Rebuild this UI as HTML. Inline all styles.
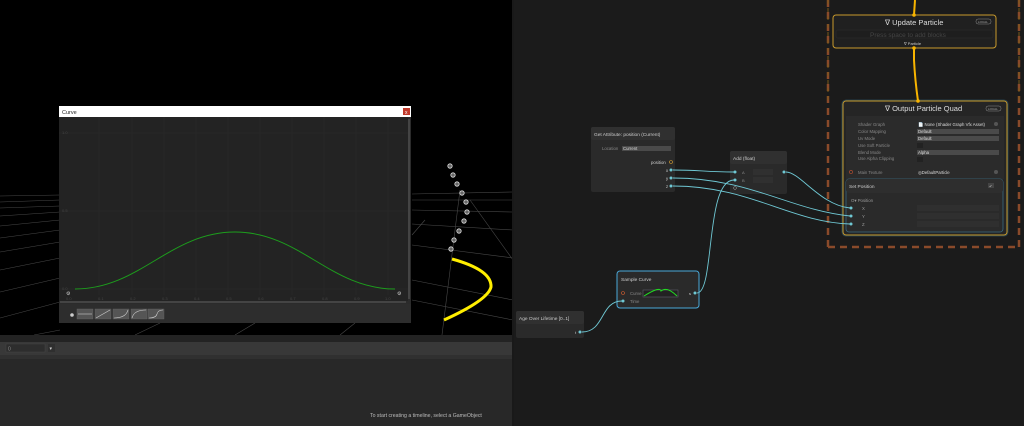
<!DOCTYPE html>
<html><head><meta charset="utf-8"><style>
html,body{margin:0;padding:0;width:1024px;height:426px;overflow:hidden;background:#1b1b1b;font-family:"Liberation Sans",sans-serif}
svg text{font-family:"Liberation Sans",sans-serif}
</style></head><body>
<svg width="1024" height="426" viewBox="0 0 1024 426" xmlns="http://www.w3.org/2000/svg">
<!-- LEFT scene -->
<rect x="0" y="0" width="513" height="426" fill="#000"/>
<g stroke="#5a5a5a" stroke-width="0.6" opacity="0.8">
<line x1="0" y1="196" x2="60" y2="195"/><line x1="0" y1="202" x2="60" y2="200"/><line x1="0" y1="208" x2="60" y2="206"/>
<line x1="0" y1="216" x2="60" y2="212"/><line x1="0" y1="226" x2="60" y2="220"/><line x1="0" y1="238" x2="60" y2="230"/>
<line x1="0" y1="252" x2="60" y2="242"/><line x1="0" y1="270" x2="60" y2="258"/><line x1="0" y1="292" x2="60" y2="278"/>
<line x1="0" y1="318" x2="60" y2="302"/>
<line x1="412" y1="194" x2="513" y2="192"/><line x1="412" y1="200" x2="513" y2="200"/><line x1="412" y1="210" x2="513" y2="212"/>
<line x1="412" y1="224" x2="513" y2="230"/><line x1="412" y1="245" x2="513" y2="258"/><line x1="412" y1="280" x2="513" y2="300"/>
<line x1="460" y1="190" x2="442" y2="335"/><line x1="470" y1="200" x2="513" y2="260"/><line x1="425" y1="220" x2="412" y2="235"/>
<line x1="412" y1="300" x2="513" y2="320"/>
<line x1="60" y1="330" x2="34" y2="335"/><line x1="160" y1="323" x2="135" y2="335"/><line x1="255" y1="323" x2="235" y2="335"/><line x1="355" y1="323" x2="340" y2="335"/>
</g>
<g fill="#666" stroke="#ddd" stroke-width="0.8">
<circle cx="450" cy="166" r="2.2"/><circle cx="453" cy="175" r="2.2"/><circle cx="457" cy="184" r="2.2"/><circle cx="462" cy="193" r="2.2"/>
<circle cx="466" cy="202" r="2.2"/><circle cx="467" cy="212" r="2.2"/><circle cx="464" cy="221" r="2.2"/><circle cx="459" cy="231" r="2.2"/>
<circle cx="454" cy="240" r="2.2"/><circle cx="451" cy="249" r="2.2"/>
</g>
<path d="M452 259 Q492 270 491 287 Q488 300 444 320" stroke="#ffee00" stroke-width="3" fill="none"/>
<!-- bottom panels -->
<rect x="0" y="335" width="513" height="7" fill="#232323"/>
<rect x="0" y="342" width="513" height="13" fill="#383838"/>
<rect x="6" y="344" width="39" height="8" fill="#2d2d2d" stroke="#444" stroke-width="0.5"/>
<text x="8" y="350.5" font-size="5" fill="#888">0</text>
<rect x="48" y="344" width="7" height="8" fill="#2f2f2f"/><text x="49.5" y="350" font-size="5" fill="#ccc">▾</text>
<rect x="0" y="355" width="513" height="4" fill="#303030"/>
<rect x="0" y="359" width="513" height="67" fill="#282828"/>
<text x="370" y="417" font-size="5.2" fill="#bbb">To start creating a timeline, select a GameObject</text>
<!-- Curve window -->
<rect x="59" y="106" width="352" height="217" fill="#2b2b2b"/>
<rect x="59" y="106" width="352" height="11" fill="#fff"/>
<text x="62" y="114" font-size="5.5" fill="#222">Curve</text>
<rect x="403" y="108" width="7" height="7" fill="#c0392b"/><text x="405" y="114" font-size="5" fill="#fff">x</text>
<rect x="59" y="117" width="349" height="184" fill="#232323"/>
<g stroke="#2c2c2c" stroke-width="0.5">
<line x1="59" y1="133" x2="408" y2="133"/><line x1="59" y1="211" x2="408" y2="211"/><line x1="59" y1="289" x2="408" y2="289"/>
<line x1="99" y1="117" x2="99" y2="295"/><line x1="132" y1="117" x2="132" y2="295"/><line x1="164" y1="117" x2="164" y2="295"/>
<line x1="196" y1="117" x2="196" y2="295"/><line x1="228" y1="117" x2="228" y2="295"/><line x1="260" y1="117" x2="260" y2="295"/>
<line x1="292" y1="117" x2="292" y2="295"/><line x1="324" y1="117" x2="324" y2="295"/><line x1="356" y1="117" x2="356" y2="295"/>
<line x1="388" y1="117" x2="388" y2="295"/>
</g>
<rect x="408" y="119" width="2" height="180" fill="#444"/>
<rect x="60" y="301" width="346" height="2" fill="#444"/>
<g font-size="4" fill="#444"><text x="62" y="134">1.0</text><text x="62" y="212">0.5</text><text x="62" y="290">0.0</text>
<text x="66" y="300">0.0</text><text x="98" y="300">0.1</text><text x="130" y="300">0.2</text><text x="162" y="300">0.3</text><text x="194" y="300">0.4</text><text x="226" y="300">0.5</text><text x="258" y="300">0.6</text><text x="290" y="300">0.7</text><text x="322" y="300">0.8</text><text x="354" y="300">0.9</text><text x="385" y="300">1.0</text></g>
<path d="M75 289 C140 289 170 232 235 232 C300 232 330 289 395 289" stroke="#1d9d1d" stroke-width="1" fill="none"/>
<text x="66" y="295" font-size="5" fill="#ccc">⚙</text><text x="397" y="295" font-size="5" fill="#ccc">⚙</text>
<rect x="59" y="304" width="352" height="19" fill="#2d2d2d"/>
<circle cx="72" cy="315" r="1.8" fill="#ccc"/>
<g fill="#555" stroke="#666" stroke-width="0.4">
<rect x="77" y="309" width="16" height="10"/><rect x="95" y="309" width="16" height="10"/><rect x="113" y="309" width="16" height="10"/><rect x="131" y="309" width="16" height="10"/><rect x="148" y="309" width="16" height="10"/></g>
<g stroke="#ccc" stroke-width="0.6" fill="none">
<line x1="78" y1="314" x2="92" y2="314"/><path d="M96 318 L110 310"/><path d="M114 318 Q126 318 128 310"/><path d="M132 318 Q134 310 146 310"/><path d="M149 318 Q156 318 157 314 Q158 310 163 310"/></g>
<!-- divider -->
<rect x="512" y="0" width="2" height="426" fill="#191919"/>
<!-- RIGHT -->
<g stroke="#8a4a2a" stroke-width="2.5" stroke-dasharray="7 5" fill="none">
<line x1="828" y1="0" x2="828" y2="247"/><line x1="1019" y1="0" x2="1019" y2="247"/><line x1="828" y1="247" x2="1019" y2="247"/></g>
<g stroke="#7a5a1a" stroke-width="1" stroke-dasharray="4 4"><line x1="828" y1="0" x2="828" y2="100"/><line x1="1019" y1="0" x2="1019" y2="100"/></g>
<path d="M915 0 L914 15 M914 48 L914 60 Q915 80 918 101" stroke="#f8b400" stroke-width="2" fill="none"/>
<!-- Update Particle -->
<rect x="833" y="15" width="163" height="33" rx="3" fill="#202020" stroke="#c89a2c" stroke-width="1"/>
<circle cx="914" cy="15" r="1.8" fill="#f8b400"/><circle cx="914" cy="48" r="1.8" fill="#f8b400"/>
<text x="885" y="25" font-size="7.5" fill="#ddd">∇ Update Particle</text>
<rect x="976" y="19" width="15" height="5" rx="2" fill="none" stroke="#888" stroke-width="0.5"/><text x="978" y="23" font-size="3" fill="#aaa">LOCAL</text>
<rect x="836" y="30" width="157" height="8" rx="2" fill="#1e1e1e" stroke="#2c2c2c" stroke-width="0.6"/>
<text x="870" y="37" font-size="6.5" fill="#444">Press space to add blocks</text>
<text x="904" y="45" font-size="4" fill="#ccc">∇ Particle</text>
<!-- Output Particle Quad -->
<rect x="843" y="101" width="164" height="134" rx="3" fill="#252525" stroke="#c89a2c" stroke-width="1"/>
<rect x="842" y="100" width="166" height="136" rx="4" fill="none" stroke="#2a4a5a" stroke-width="0.8"/>
<circle cx="918" cy="101" r="1.8" fill="#f8b400"/>
<text x="885" y="111" font-size="7.5" fill="#ddd">∇ Output Particle Quad</text>
<rect x="986" y="106" width="15" height="5" rx="2" fill="none" stroke="#888" stroke-width="0.5"/><text x="988" y="110" font-size="3" fill="#aaa">LOCAL</text>
<rect x="846" y="116" width="158" height="63" fill="#2b2b2b"/>
<g font-size="4.3" fill="#888"><text x="858" y="126">Shader Graph</text><text x="858" y="133">Color Mapping</text><text x="858" y="140">Uv Mode</text><text x="858" y="147">Use Soft Particle</text><text x="858" y="154">Blend Mode</text><text x="858" y="160">Use Alpha Clipping</text><text x="858" y="174">Main Texture</text></g>
<g fill="#4a4a4a"><rect x="917" y="129" width="82" height="5"/><rect x="917" y="136" width="82" height="5"/><rect x="917" y="150" width="82" height="5"/></g>
<g fill="#222"><rect x="917" y="143" width="6" height="5"/><rect x="917" y="157" width="6" height="5"/></g>
<g font-size="4.3" fill="#ddd"><text x="918" y="126">📄 None (Shader Graph Vfx Asset)</text><text x="918" y="133">Default</text><text x="918" y="140">Default</text><text x="918" y="154">Alpha</text><text x="918" y="174">◎DefaultParticle</text></g>
<circle cx="996" cy="124" r="2" fill="#555"/><circle cx="996" cy="172" r="2" fill="#555"/>
<circle cx="851" cy="172" r="1.6" fill="none" stroke="#c05030" stroke-width="0.6"/>
<!-- Set Position -->
<rect x="846" y="179" width="157" height="53" rx="3" fill="#2a2a2a" stroke="#3a6a80" stroke-width="0.8"/>
<rect x="846" y="179" width="157" height="14" rx="3" fill="#2e2e2e"/>
<text x="849" y="188" font-size="4.8" fill="#ccc">Set Position</text>
<rect x="988" y="183" width="6" height="5" fill="#444"/><text x="989" y="187.5" font-size="4" fill="#eee">✓</text>
<g font-size="4.3" fill="#999"><text x="851" y="202">O▾ Position</text><text x="862" y="210">X</text><text x="862" y="218">Y</text><text x="862" y="226">Z</text></g>
<g fill="#2f2f2f"><rect x="917" y="205" width="82" height="6"/><rect x="917" y="213" width="82" height="6"/><rect x="917" y="221" width="82" height="6"/></g>
<g fill="#6fc8d4"><circle cx="851" cy="208" r="1.5"/><circle cx="851" cy="216" r="1.5"/><circle cx="851" cy="224" r="1.5"/></g>
<!-- Get Attribute -->
<rect x="591" y="127" width="84" height="65" rx="2" fill="#2a2a2a"/>
<rect x="591" y="127" width="84" height="13" rx="2" fill="#303030"/>
<text x="594" y="136" font-size="4.8" fill="#ccc">Get Attribute: position (Current)</text>
<text x="602" y="150" font-size="4.3" fill="#888">Location</text>
<rect x="622" y="146" width="49" height="5" fill="#4a4a4a"/><text x="623" y="150" font-size="4.3" fill="#ddd">Current</text>
<g font-size="4.3" fill="#ccc"><text x="651" y="164">position</text><text x="666" y="172">x</text><text x="666" y="180">y</text><text x="666" y="188">z</text></g>
<circle cx="671" cy="162" r="1.5" fill="none" stroke="#d8a030" stroke-width="0.6"/>
<g fill="#6fc8d4"><circle cx="671" cy="170" r="1.5"/><circle cx="671" cy="178" r="1.5"/><circle cx="671" cy="186" r="1.5"/></g>
<!-- Add -->
<rect x="730" y="151" width="57" height="43" rx="2" fill="#2a2a2a"/>
<rect x="730" y="151" width="57" height="13" rx="2" fill="#303030"/>
<text x="733" y="160" font-size="4.8" fill="#ccc">Add (float)</text>
<g font-size="4" fill="#888"><text x="742" y="174">A</text><text x="742" y="182">B</text></g>
<g fill="#303030"><rect x="753" y="169" width="20" height="6"/><rect x="753" y="177" width="20" height="6"/></g>
<g fill="#6fc8d4"><circle cx="735" cy="172" r="1.5"/><circle cx="735" cy="180" r="1.5"/><circle cx="784" cy="172" r="1.5"/></g>
<circle cx="735" cy="188" r="1.4" fill="none" stroke="#aaa" stroke-width="0.5"/>
<!-- Sample Curve -->
<rect x="617" y="271" width="82" height="37" rx="3" fill="#2a2a2a" stroke="#4aa8d8" stroke-width="1"/>
<text x="621" y="281" font-size="4.8" fill="#ccc">Sample Curve</text>
<g font-size="4.3" fill="#888"><text x="630" y="295">Curve</text><text x="630" y="303">Time</text></g>
<rect x="643" y="290" width="35" height="7" fill="#222" stroke="#667" stroke-width="0.5"/>
<path d="M644 296 Q660 286 661 291 Q667 286 677 296" stroke="#2d2" stroke-width="1" fill="none"/>
<circle cx="623" cy="293" r="1.5" fill="none" stroke="#d86030" stroke-width="0.6"/>
<g fill="#6fc8d4"><circle cx="623" cy="301" r="1.5"/><circle cx="695" cy="293" r="1.5"/></g>
<text x="689" y="295" font-size="4" fill="#ccc">s</text>
<!-- Age Over Lifetime -->
<rect x="516" y="311" width="68" height="27" rx="2" fill="#2a2a2a"/>
<rect x="516" y="311" width="68" height="13" rx="2" fill="#303030"/>
<text x="519" y="320" font-size="4.8" fill="#ccc">Age Over Lifetime [0..1]</text>
<circle cx="580" cy="332" r="1.5" fill="#6fc8d4"/><text x="575" y="334" font-size="4" fill="#ccc">t</text>
<!-- wires -->
<g stroke="#6fc8d4" stroke-width="0.9" fill="none">
<path d="M673 170 C700 170 705 172 734 172"/>
<path d="M673 178 C750 178 790 210 850 216"/>
<path d="M673 186 C750 186 790 222 850 224"/>
<path d="M786 172 C800 172 820 205 850 208"/>
<path d="M697 293 C715 293 705 180 734 180"/>
<path d="M582 332 C605 332 600 301 622 301"/>
</g>
</svg>
</body></html>
